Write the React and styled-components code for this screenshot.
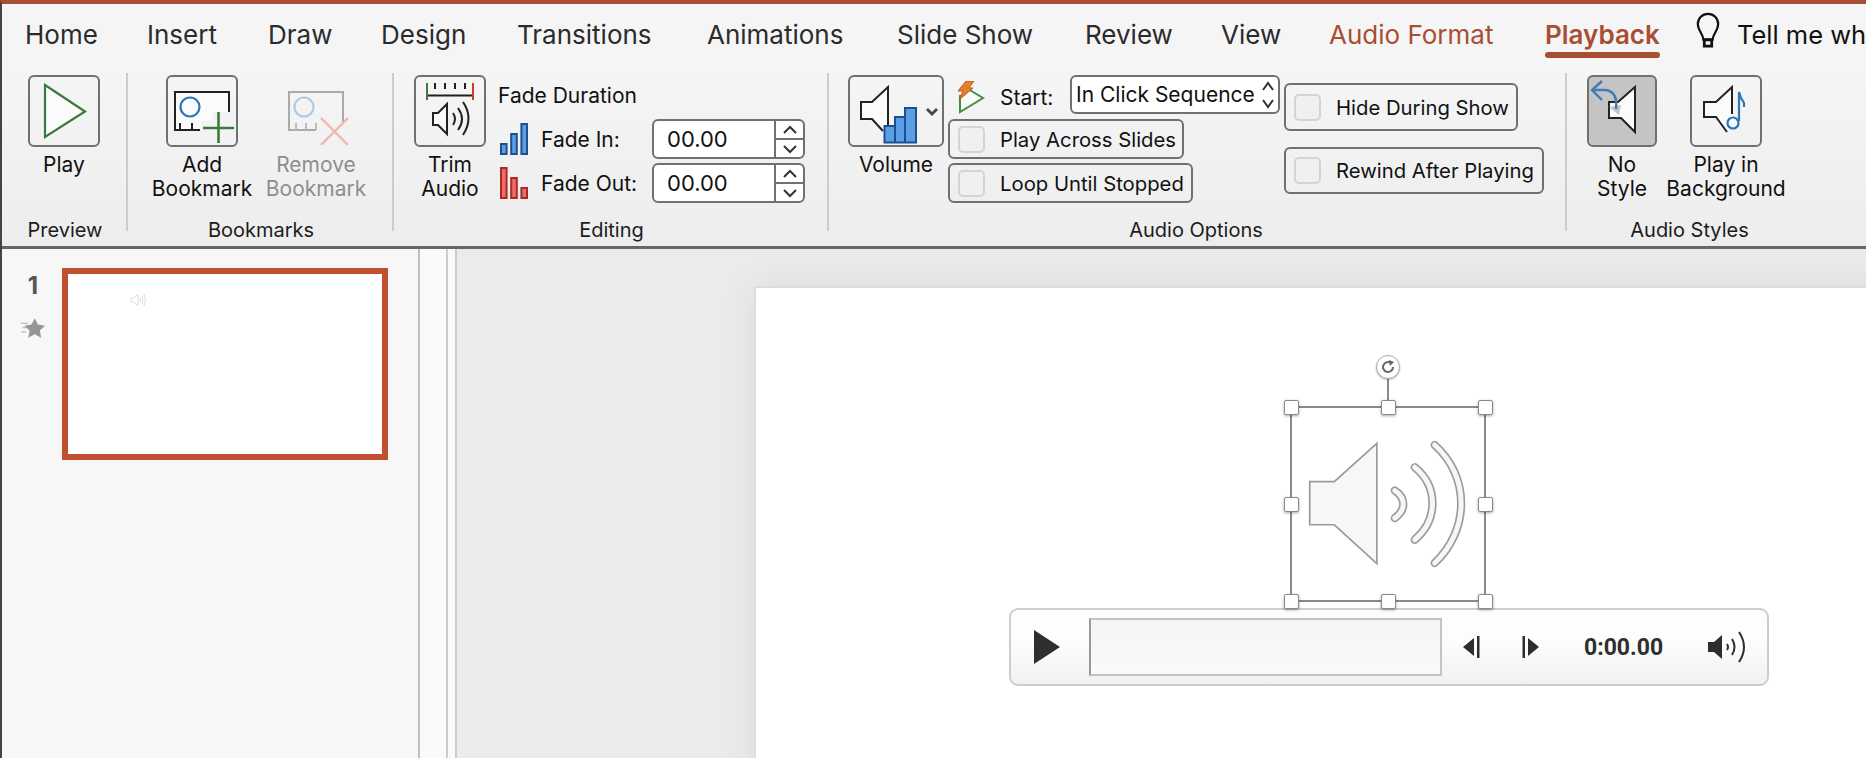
import React from 'react'
import styled, { createGlobalStyle } from 'styled-components'

const Global = createGlobalStyle`
  html, body {
    margin: 0;
    padding: 0;
    width: 1866px;
    height: 758px;
    overflow: hidden;
    background: #ebebeb;
    font-family: Inter, "Liberation Sans", sans-serif;
  }
`

const Window = styled.div`
  width: 1866px;
  height: 758px;
  display: flex;
  flex-direction: column;
  overflow: hidden;
  border-top: 4px solid #a84e32;
  border-left: 2px solid #444;
  box-sizing: border-box;
`

const TabBar = styled.div`
  height: 69px;
  flex: none;
  display: flex;
  align-items: flex-start;
  padding: 13px 0 0 23px;
  box-sizing: border-box;
  background: #f5f5f5;
  white-space: nowrap;
`

const Tab = styled.div`
  width: ${p => p.w}px;
  flex: none;
  font-size: 26px;
  line-height: 36px;
  height: 50px;
  color: ${p => (p.accent ? '#a84e32' : '#2b2b2b')};
  font-weight: ${p => (p.bold ? 600 : 400)};
`

const TabLabel = styled.span`
  display: inline-block;
  position: relative;
  &::after {
    content: '';
    display: ${p => (p.active ? 'block' : 'none')};
    position: absolute;
    left: 0;
    right: 0;
    bottom: -5px;
    height: 6px;
    border-radius: 3px;
    background: #a84e32;
  }
`

const Tell = styled.div`
  display: flex;
  align-items: flex-start;
  gap: 15px;
  font-size: 25.5px;
  line-height: 36px;
  color: #111;
  svg { margin-top: -5px; flex: none; }
`

const Ribbon = styled.div`
  height: 176px;
  flex: none;
  display: flex;
  box-sizing: border-box;
  border-bottom: 3px solid #666;
  background: linear-gradient(#f5f5f5, #ededed);
  padding-top: 2px;
`

const Group = styled.div`
  flex: none;
  position: relative;
  width: ${p => p.w}px;
  height: 165px;
  box-sizing: border-box;
  display: flex;
  flex-direction: column;
  &::after {
    content: '';
    display: ${p => (p.last ? 'none' : 'block')};
    position: absolute;
    right: 0;
    top: -2px;
    width: 2px;
    height: 158px;
    background: #ccc;
  }
`

const GroupBody = styled.div`
  flex: 1;
  display: flex;
  padding-left: ${p => p.pl || 0}px;
  gap: ${p => p.gap || 0}px;
  min-height: 0;
`

const GroupName = styled.div`
  height: 20px;
  line-height: 20px;
  font-size: 20px;
  color: #1c1c1c;
  text-align: center;
  padding-right: ${p => p.pr || 0}px;
`

const Tool = styled.div`
  width: ${p => p.w}px;
  flex: none;
  display: flex;
  flex-direction: column;
  align-items: center;
`

const IconButton = styled.div`
  width: ${p => p.w || 72}px;
  height: 72px;
  flex: none;
  box-sizing: border-box;
  border: 2px solid ${p => (p.plain ? 'transparent' : '#707070')};
  border-radius: 6px;
  background: ${p => (p.on ? '#c4c4c4' : 'transparent')};
  svg { display: block; }
`

const ToolLabel = styled.div`
  margin-top: 6px;
  font-size: 21px;
  line-height: 24px;
  text-align: center;
  white-space: nowrap;
  color: ${p => (p.off ? '#8e8e8e' : '#111')};
`

const FadeColumn = styled.div`
  display: flex;
  flex-direction: column;
  margin-left: 12px;
`

const FadeTitle = styled.div`
  font-size: 21px;
  line-height: 24px;
  height: 44px;
  padding-top: 9px;
  box-sizing: border-box;
  color: #111;
`

const FadeRow = styled.div`
  display: flex;
  align-items: center;
  height: 40px;
  margin-bottom: 4px;
  font-size: 21px;
  color: #111;
  svg { flex: none; margin-left: 2px; margin-right: 13px; }
`

const FadeText = styled.span`
  width: 111px;
  flex: none;
`

const Spinner = styled.div`
  width: 153px;
  height: 40px;
  flex: none;
  box-sizing: border-box;
  border: 2px solid #707070;
  border-radius: 6px;
  background: #fff;
  display: flex;
  overflow: hidden;
  svg { margin: 0; }
`

const SpinnerValue = styled.div`
  flex: 1;
  font-size: 22px;
  line-height: 36px;
  padding-left: 13px;
  color: #111;
`

const Steppers = styled.div`
  width: 27px;
  border-left: 2px solid #707070;
  display: flex;
  flex-direction: column;
`

const Stepper = styled.div`
  flex: 1;
  display: flex;
  align-items: center;
  justify-content: center;
  & + & { border-top: 2px solid #707070; }
`

const OptionColumn = styled.div`
  display: flex;
  flex-direction: column;
  margin-left: 4px;
`

const StartRow = styled.div`
  display: flex;
  align-items: center;
  height: 44px;
  font-size: 21px;
  color: #111;
  svg { flex: none; margin-left: 7px; margin-right: 15px; }
`

const StartText = styled.span`
  width: 70px;
  flex: none;
`

const Combo = styled.div`
  width: 210px;
  height: 39px;
  flex: none;
  margin-bottom: 5px;
  box-sizing: border-box;
  border: 2px solid #707070;
  border-radius: 6px;
  background: #fff;
  display: flex;
  align-items: center;
  justify-content: space-between;
  padding: 0 3px 0 4px;
  font-size: 21px;
  white-space: nowrap;
  svg { margin: 0; }
`

const CheckButton = styled.div`
  width: ${p => p.w}px;
  height: ${p => p.h || 40}px;
  flex: none;
  margin-bottom: ${p => p.mb || 4}px;
  box-sizing: border-box;
  border: 2px solid #707070;
  border-radius: 6px;
  display: flex;
  align-items: center;
  padding-left: 8px;
  font-size: 20.3px;
  color: #111;
  white-space: nowrap;
`

const CheckBox = styled.span`
  width: 27px;
  height: 27px;
  flex: none;
  box-sizing: border-box;
  margin-right: 15px;
  border: 2px solid #d4d4d4;
  border-radius: 5px;
  background: #f0f0f0;
`

const RightOptions = styled.div`
  display: flex;
  flex-direction: column;
  margin-left: 4px;
  padding-top: 8px;
`

const Workspace = styled.div`
  flex: 1;
  display: flex;
  min-height: 0;
`

const Sidebar = styled.div`
  width: 418px;
  flex: none;
  box-sizing: border-box;
  border-right: 2px solid #c0c0c0;
  background: #f7f7f7;
  display: flex;
  padding: 19px 0 0 19px;
`

const SlideMeta = styled.div`
  width: 24px;
  margin-right: 17px;
  padding-top: 3px;
  flex: none;
  display: flex;
  flex-direction: column;
  align-items: center;
  font-size: 24px;
  font-weight: 700;
  line-height: 30px;
  color: #555;
  svg { margin-top: 17px; display: block; flex: none; }
`

const Thumb = styled.div`
  width: 326px;
  height: 192px;
  flex: none;
  box-sizing: border-box;
  border: 6px solid #c15032;
  background: #fff;
  padding: 19px 0 0 62px;
  svg { display: block; }
`

const Splitter = styled.div`
  width: 37px;
  flex: none;
  display: flex;
  background: #fafafa;
`

const SplitterLine = styled.div`
  width: 2px;
  margin-left: ${p => p.ml}px;
  background: #ccc;
`

const Stage = styled.div`
  flex: 1;
  position: relative;
  overflow: hidden;
  background: #ebebeb;
  padding: 37px 0 0 297px;
`

const Slide = styled.div`
  width: 1200px;
  height: 600px;
  background: #fff;
  border: 2px solid #dcdcdc;
  box-shadow: 0 0 36px rgba(0, 0, 0, 0.07);
`

const Selection = styled.div`
  position: absolute;
  left: 833px;
  top: 157px;
  width: 196px;
  height: 196px;
  box-sizing: border-box;
  border: 2px solid #8a8a8a;
`

const Handle = styled.span`
  position: absolute;
  left: calc(${p => p.x}% + ${p => p.x / 50 - 1}px - 7.5px);
  top: calc(${p => p.y}% + ${p => p.y / 50 - 1}px - 7.5px);
  width: 15px;
  height: 15px;
  box-sizing: border-box;
  background: #fff;
  border: 1px solid #8a8a8a;
  border-radius: 2px;
  box-shadow: 0 1px 3px rgba(0, 0, 0, 0.35);
`

const RotateStem = styled.span`
  position: absolute;
  left: calc(50% - 1px);
  top: -30px;
  width: 2px;
  height: 30px;
  background: #8a8a8a;
`

const RotateKnob = styled.span`
  position: absolute;
  left: calc(50% - 12px);
  top: -53px;
  width: 24px;
  height: 24px;
  box-sizing: border-box;
  border: 1px solid #aaa;
  border-radius: 50%;
  background: #fff;
  display: flex;
  align-items: center;
  justify-content: center;
  box-shadow: 0 1px 2px rgba(0, 0, 0, 0.25);
`

const SpeakerArt = styled.svg`
  position: absolute;
  left: 15px;
  top: 32px;
`

const MediaBar = styled.div`
  position: absolute;
  left: 552px;
  top: 359px;
  width: 760px;
  height: 78px;
  box-sizing: border-box;
  border: 2px solid #cdcdcd;
  border-radius: 9px;
  background: linear-gradient(#fdfdfd 40%, #f0f1f2);
  display: flex;
  align-items: center;
  padding-left: 23px;
`

const PlayGlyph = styled.svg`
  flex: none;
  margin-right: 29px;
`

const Track = styled.div`
  width: 353px;
  height: 58px;
  flex: none;
  box-sizing: border-box;
  border: 2px solid #c4c4c4;
  border-left-color: #9a9a9a;
  background: linear-gradient(#f4f5f6, #f9fafa);
  margin-right: 20px;
`

const SkipGlyph = styled.svg`
  flex: none;
  margin-right: ${p => p.mr}px;
`

const Time = styled.div`
  font-family: Roboto, "Liberation Sans", sans-serif;
  font-size: 23px;
  font-weight: 700;
  color: #2e2e2e;
  width: 123px;
  flex: none;
`

const star = '32,0 39.5,15 56,17.5 44,29 47,45.5 32,37.5 17,45.5 20,29 8,17.5 24.5,15'

const tabs = [
  ['Home', 122],
  ['Insert', 121],
  ['Draw', 113],
  ['Design', 136],
  ['Transitions', 190],
  ['Animations', 190],
  ['Slide Show', 188],
  ['Review', 136],
  ['View', 108],
  ['Audio Format', 216, true],
  ['Playback', 149, true, true]
]

const arcs = [
  'M404 452 C438 475 438 510 404 535',
  'M464 382 C535 440 535 540 464 600',
  'M524 315 C630 410 630 570 524 670'
]

const Chevron = ({ up, size = 16 }) => (
  <svg width={size} height={size * 0.625} viewBox="0 0 16 10">
    <path d={up ? 'M2 8 L8 2 L14 8' : 'M2 2 L8 8 L14 2'} fill="none" stroke="#333" strokeWidth="2" />
  </svg>
)

const FadeBars = ({ kind }) => {
  const blue = kind === 'in'
  const heights = blue ? [10, 20, 30] : [30, 20, 10]
  return (
    <svg width="28" height="32" viewBox="0 0 28 32">
      {heights.map((h, i) => (
        <rect
          key={i}
          x={1 + i * 10.2}
          y={31 - h}
          width="5.6"
          height={h}
          fill={blue ? '#5a9ee6' : '#ee6b6b'}
          stroke={blue ? '#1d4f8c' : '#a82a22'}
          strokeWidth="2"
        />
      ))}
    </svg>
  )
}

const CheckOption = ({ children, w, h, mb }) => (
  <CheckButton w={w} h={h} mb={mb}>
    <CheckBox />
    {children}
  </CheckButton>
)

export default function App() {
  return (
    <>
      <Global />
      <Window>
        <TabBar>
          {tabs.map(([name, w, accent, bold]) => (
            <Tab key={name} w={w} accent={accent} bold={bold}>
              <TabLabel active={bold}>{name}</TabLabel>
            </Tab>
          ))}
          <Tell>
            <svg width="28" height="37" viewBox="0 0 26 40">
              <path
                d="M8 30 C8 24 2 20 2 13 A11 11 0 0 1 24 13 C24 20 18 24 18 30 Z"
                fill="none"
                stroke="#111"
                strokeWidth="2.4"
              />
              <path d="M9 30 H17 V37 H9 Z" fill="none" stroke="#111" strokeWidth="3" />
            </svg>
            <span>Tell me what you want to do</span>
          </Tell>
        </TabBar>

        <Ribbon>
          <Group w={126}>
            <GroupBody pl={26}>
              <Tool w={72}>
                <IconButton>
                  <svg width="68" height="68" viewBox="0 0 68 68">
                    <path d="M15 8 L55 34.5 L15 60 Z" fill="#fbfbfb" stroke="#3a7a3e" strokeWidth="2.2" />
                  </svg>
                </IconButton>
                <ToolLabel>Play</ToolLabel>
              </Tool>
            </GroupBody>
            <GroupName>Preview</GroupName>
          </Group>

          <Group w={266}>
            <GroupBody pl={21} gap={8}>
              <Tool w={106}>
                <IconButton>
                  <svg width="68" height="68" viewBox="0 0 68 68">
                    <rect x="7" y="15" width="54" height="38" fill="#fbfbfb" />
                    <path d="M32 53 H7 V15 H61 V45" fill="none" stroke="#222" strokeWidth="2" />
                    <path d="M12 53 V46 M24 53 V46" stroke="#222" strokeWidth="2" />
                    <circle cx="22" cy="30" r="9.5" fill="none" stroke="#2f75b5" strokeWidth="2.2" />
                    <path d="M33 44 H45 V35 H66 V66 H33 Z" fill="#f2f2f2" />
                    <path d="M35 51 H66 M50.5 35 V66" stroke="#3a7a3e" strokeWidth="2.6" />
                  </svg>
                </IconButton>
                <ToolLabel>
                  Add
                  <br />
                  Bookmark
                </ToolLabel>
              </Tool>
              <Tool w={106}>
                <IconButton plain>
                  <svg width="68" height="68" viewBox="0 0 68 68">
                    <path d="M34 53 H7 V15 H61 V45" fill="none" stroke="#aaa" strokeWidth="2" />
                    <path d="M14 53 V46 M24 53 V46 M34 53 V46" stroke="#bbb" strokeWidth="2" />
                    <circle cx="22" cy="30" r="9.5" fill="none" stroke="#aecbe4" strokeWidth="2.2" />
                    <path d="M39 41 L66 68 M66 41 L39 68" stroke="#f0b6ae" strokeWidth="2.4" />
                  </svg>
                </IconButton>
                <ToolLabel off>
                  Remove
                  <br />
                  Bookmark
                </ToolLabel>
              </Tool>
            </GroupBody>
            <GroupName>Bookmarks</GroupName>
          </Group>

          <Group w={435}>
            <GroupBody pl={20}>
              <Tool w={72}>
                <IconButton>
                  <svg width="68" height="68" viewBox="0 0 68 68">
                    <path d="M12 18.5 H57" stroke="#222" strokeWidth="2" />
                    <path d="M11 6 V23" stroke="#3a7a3e" strokeWidth="2" />
                    <path d="M57 6 V23" stroke="#d23a2a" strokeWidth="2" />
                    <path d="M19 6 V12 M29 6 V12 M39 6 V12 M49 6 V12" stroke="#222" strokeWidth="2" />
                    <path d="M17 36 H22 L31 27 V57 L22 48 H17 Z" fill="#fbfbfb" stroke="#222" strokeWidth="2" />
                    <path d="M37 36 Q41 42 37 48 M42 31 Q50 42 42 53 M47 25 Q58 41 47 58" fill="none" stroke="#222" strokeWidth="2" />
                  </svg>
                </IconButton>
                <ToolLabel>
                  Trim
                  <br />
                  Audio
                </ToolLabel>
              </Tool>
              <FadeColumn>
                <FadeTitle>Fade Duration</FadeTitle>
                <FadeRow>
                  <FadeBars kind="in" />
                  <FadeText>Fade In:</FadeText>
                  <Spinner>
                    <SpinnerValue>00.00</SpinnerValue>
                    <Steppers>
                      <Stepper><Chevron up /></Stepper>
                      <Stepper><Chevron /></Stepper>
                    </Steppers>
                  </Spinner>
                </FadeRow>
                <FadeRow>
                  <FadeBars kind="out" />
                  <FadeText>Fade Out:</FadeText>
                  <Spinner>
                    <SpinnerValue>00.00</SpinnerValue>
                    <Steppers>
                      <Stepper><Chevron up /></Stepper>
                      <Stepper><Chevron /></Stepper>
                    </Steppers>
                  </Spinner>
                </FadeRow>
              </FadeColumn>
            </GroupBody>
            <GroupName>Editing</GroupName>
          </Group>

          <Group w={738}>
            <GroupBody pl={19}>
              <Tool w={96}>
                <IconButton w={96}>
                  <svg width="92" height="68" viewBox="0 0 92 68">
                    <path d="M11 25 H22 L38 10 V50 L33 54 L22 42 H11 Z" fill="#fbfbfb" />
                    <path d="M33 54 L22 42 H11 V25 H22 L38 10 V48" fill="none" stroke="#222" strokeWidth="2" />
                    <path d="M34.5 65.5 V49 H45 V40 H55 V31 H66 V65.5 Z" fill="#5a9ee6" stroke="#1d4f8c" strokeWidth="2" />
                    <path d="M45 49 V65.5 M55 40 V65.5" stroke="#1d4f8c" strokeWidth="2" />
                    <path d="M77 32 L82 37 L87 32" fill="none" stroke="#444" strokeWidth="2.8" />
                  </svg>
                </IconButton>
                <ToolLabel>Volume</ToolLabel>
              </Tool>
              <OptionColumn>
                <StartRow>
                  <svg width="30" height="33" viewBox="0 0 30 33">
                    <path d="M5 14 V31 L28 17 L13 8" fill="#fbfbfb" stroke="#3f9142" strokeWidth="2" />
                    <path d="M11 0 H19 L14 7 H18 L4 19 L8 10 H3 Z" fill="#e87f2a" stroke="#b85c1c" strokeWidth="1" />
                  </svg>
                  <StartText>Start:</StartText>
                  <Combo>
                    In Click Sequence
                    <svg width="14" height="30" viewBox="0 0 14 30">
                      <path d="M2 10 L7 3 L12 10 M2 20 L7 27 L12 20" fill="none" stroke="#333" strokeWidth="2" />
                    </svg>
                  </Combo>
                </StartRow>
                <CheckOption w={236}>Play Across Slides</CheckOption>
                <CheckOption w={245}>Loop Until Stopped</CheckOption>
              </OptionColumn>
              <RightOptions>
                <CheckOption w={234} h={48} mb={16}>Hide During Show</CheckOption>
                <CheckOption w={260} h={47}>Rewind After Playing</CheckOption>
              </RightOptions>
            </GroupBody>
            <GroupName pr={4}>Audio Options</GroupName>
          </Group>

          <Group w={299} last>
            <GroupBody pl={20} gap={33}>
              <Tool w={70}>
                <IconButton w={70} on>
                  <svg width="66" height="68" viewBox="0 0 66 68">
                    <path d="M20 25 H29 L46 10 V55 L32 41 H20 Z" fill="#fbfbfb" stroke="#222" strokeWidth="2" />
                    <path d="M20 30 L30 38 L32 28 Z" fill="#c4c4c4" />
                    <path d="M3 13 H17 Q29 15 27 32" fill="none" stroke="#3f7bb5" strokeWidth="2.4" />
                    <path d="M13 4 L3 13 L13 23" fill="none" stroke="#3f7bb5" strokeWidth="2.4" />
                  </svg>
                </IconButton>
                <ToolLabel>
                  No
                  <br />
                  Style
                </ToolLabel>
              </Tool>
              <Tool w={72}>
                <IconButton>
                  <svg width="68" height="68" viewBox="0 0 68 68">
                    <path d="M12 25 H24 L40 10 V46 L35 55 L24 40 H12 Z" fill="#fbfbfb" />
                    <path d="M35 55 L24 40 H12 V25 H24 L40 10 V37" fill="none" stroke="#222" strokeWidth="2" />
                    <circle cx="41" cy="46" r="5.5" fill="#fbfbfb" stroke="#2f75b5" strokeWidth="2.2" />
                    <path d="M47 44 V15 Q48 20 52 26 V30" fill="none" stroke="#2f75b5" strokeWidth="2.2" />
                  </svg>
                </IconButton>
                <ToolLabel>
                  Play in
                  <br />
                  Background
                </ToolLabel>
              </Tool>
            </GroupBody>
            <GroupName pr={54}>Audio Styles</GroupName>
          </Group>
        </Ribbon>

        <Workspace>
          <Sidebar>
            <SlideMeta>
              1
              <svg width="24" height="20" viewBox="0 0 56 46">
                <polygon points={star} fill="#969696" />
                <path d="M0 12 H16 M4 22 H12 M0 32 H12" stroke="#bbb" strokeWidth="3" />
              </svg>
            </SlideMeta>
            <Thumb>
              <svg width="17" height="14" viewBox="0 0 17 14">
                <path d="M1 5 H4 L8 1 V13 L4 9 H1 Z" fill="none" stroke="#ddd" strokeWidth="1" />
                <path d="M10 5 Q11 7 10 9 M12 3 Q14 7 12 11 M14 1 Q17 7 14 13" fill="none" stroke="#ddd" strokeWidth="1" />
              </svg>
            </Thumb>
          </Sidebar>
          <Splitter>
            <SplitterLine ml={26} />
            <SplitterLine ml={7} />
          </Splitter>
          <Stage>
            <Slide />
            <MediaBar>
              <PlayGlyph width="26" height="34" viewBox="0 0 26 34">
                <path d="M0 0 L26 17 L0 34 Z" fill="#2e2e2e" />
              </PlayGlyph>
              <Track />
              <SkipGlyph width="18" height="24" viewBox="0 0 18 24" mr={42}>
                <path d="M12 3 V21 L1 12 Z M15 1 H17.5 V23 H15 Z" fill="#2e2e2e" />
              </SkipGlyph>
              <SkipGlyph width="18" height="24" viewBox="0 0 18 24" mr={44}>
                <path d="M6 3 V21 L17 12 Z M0.5 1 H3 V23 H0.5 Z" fill="#2e2e2e" />
              </SkipGlyph>
              <Time>0:00.00</Time>
              <svg width="40" height="32" viewBox="0 0 40 32">
                <path d="M1 11 H7 L15 4 V28 L7 21 H1 Z" fill="#2e2e2e" />
                <path d="M20 13 Q22 16 20 19 M25 8 Q30 16 25 24 M32 1 Q42 16 32 31" fill="none" stroke="#2e2e2e" strokeWidth="2" />
              </svg>
            </MediaBar>
            <Selection>
              <RotateStem />
              <RotateKnob>
                <svg width="16" height="16" viewBox="0 0 16 16">
                  <path d="M13 8 A5 5 0 1 1 10.5 3.7" fill="none" stroke="#666" strokeWidth="2" />
                  <path d="M9 1 L14 3 L10 7 Z" fill="#666" />
                </svg>
              </RotateKnob>
              <SpeakerArt width="163" height="128" viewBox="140 300 490 385">
                <path d="M148 425 H222 L350 310 V672 L222 555 H148 Z" fill="#f7f7f7" stroke="#999" strokeWidth="5" />
                {arcs.map(d => (
                  <g key={d}>
                    <path d={d} fill="none" stroke="#9c9c9c" strokeWidth="25" strokeLinecap="round" />
                    <path d={d} fill="none" stroke="#f6f6f6" strokeWidth="15" strokeLinecap="round" />
                  </g>
                ))}
              </SpeakerArt>
              {[0, 50, 100].map(y =>
                [0, 50, 100].map(x =>
                  x === 50 && y === 50 ? null : <Handle key={`${x}-${y}`} x={x} y={y} />
                )
              )}
            </Selection>
          </Stage>
        </Workspace>
      </Window>
    </>
  )
}
